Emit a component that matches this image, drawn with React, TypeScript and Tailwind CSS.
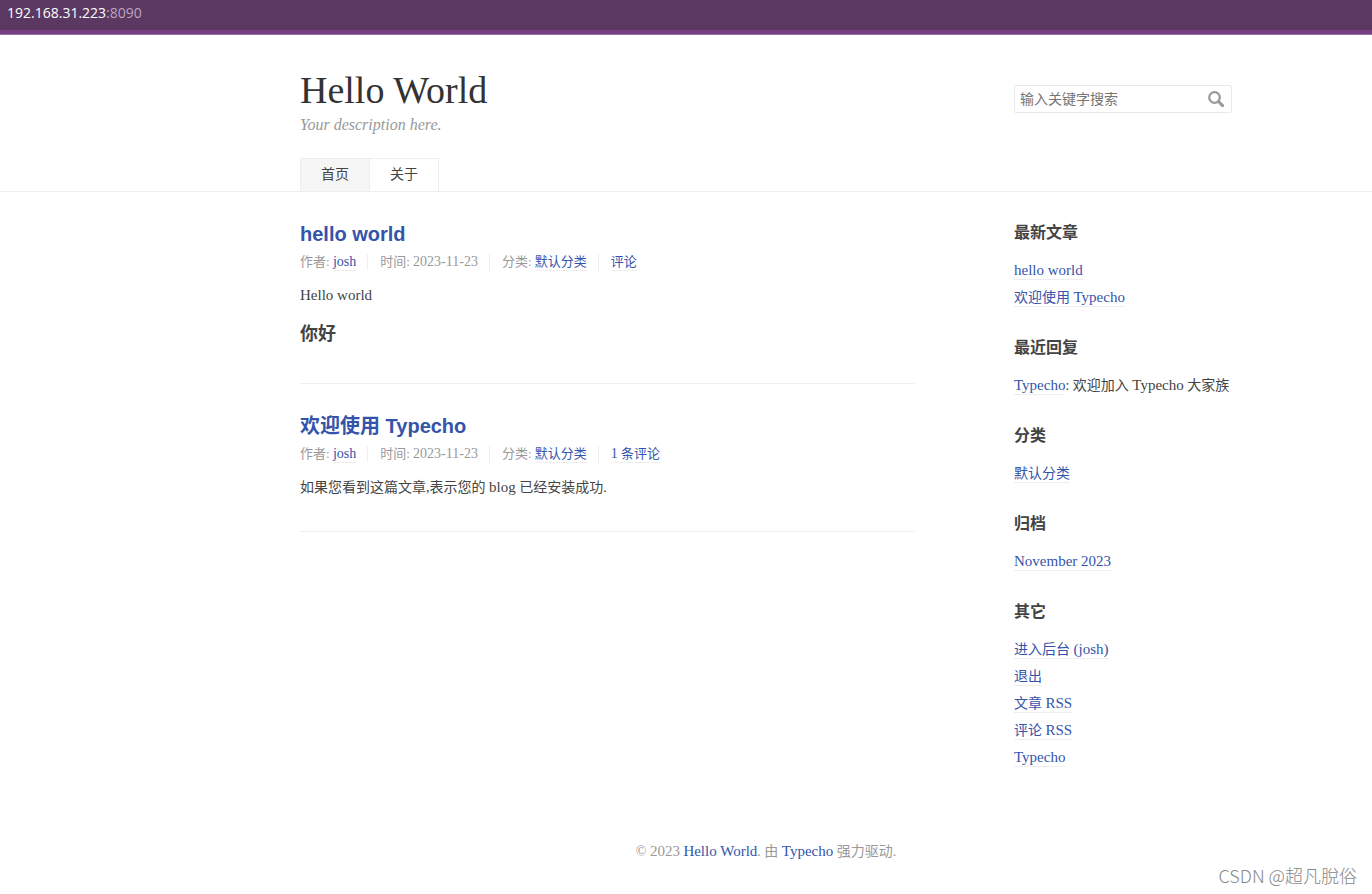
import type { ReactNode } from 'react';

interface Post {
  title: string;
  author: string;
  date: string;
  category: string;
  comments: ReactNode;
  body: ReactNode;
}

// Latin glyphs run small next to the Chinese ones, so they are set one step up
function Latin({ children }: { children: ReactNode }) {
  return <span className="text-[15px]">{children}</span>;
}

function LatinSmall({ children }: { children: ReactNode }) {
  return <span className="text-[14px]">{children}</span>;
}

function TextLink({ children }: { children: ReactNode }) {
  return (
    <a href="#" className="inline-block border-b border-[#eee] leading-4 text-[#3354aa]">
      {children}
    </a>
  );
}

const posts: Post[] = [
  {
    title: 'hello world',
    author: 'josh',
    date: '2023-11-23',
    category: '默认分类',
    comments: '评论',
    body: (
      <>
        <p><Latin>Hello world</Latin></p>
        <h3 className="mt-3 mb-[6px] text-lg leading-[26px] font-bold">你好</h3>
      </>
    ),
  },
  {
    title: '欢迎使用 Typecho',
    author: 'josh',
    date: '2023-11-23',
    category: '默认分类',
    comments: <><LatinSmall>1</LatinSmall> 条评论</>,
    body: <p>如果您看到这篇文章,表示您的 <Latin>blog</Latin> 已经安装成功.</p>,
  },
];

const widgets: { title: string; items: ReactNode[] }[] = [
  {
    title: '最新文章',
    items: [
      <TextLink><Latin>hello world</Latin></TextLink>,
      <TextLink>欢迎使用 <Latin>Typecho</Latin></TextLink>,
    ],
  },
  {
    title: '最近回复',
    items: [
      <>
        <TextLink><Latin>Typecho</Latin></TextLink>: 欢迎加入 <Latin>Typecho</Latin> 大家族
      </>,
    ],
  },
  { title: '分类', items: [<TextLink>默认分类</TextLink>] },
  { title: '归档', items: [<TextLink><Latin>November 2023</Latin></TextLink>] },
  {
    title: '其它',
    items: [
      <TextLink>进入后台 <Latin>(josh)</Latin></TextLink>,
      <TextLink>退出</TextLink>,
      <TextLink>文章 <Latin>RSS</Latin></TextLink>,
      <TextLink>评论 <Latin>RSS</Latin></TextLink>,
      <TextLink><Latin>Typecho</Latin></TextLink>,
    ],
  },
];

function AddressBar() {
  return (
    <div className="h-[35px] border-b border-[#9a6fa3] bg-[#5b3861]">
      <div className="h-[34px] border-b-4 border-[#753f82] px-[7px] font-['Open_Sans',sans-serif] text-[14px] leading-[26px] text-white">
        192.168.31.223<span className="text-[#bba5c0]">:8090</span>
      </div>
    </div>
  );
}

function SearchForm() {
  return (
    <form
      role="search"
      onSubmit={(e) => e.preventDefault()}
      className="mt-[50px] flex h-7 w-[218px] items-center rounded-xs border border-[#e9e9e9]"
    >
      <input
        type="text"
        aria-label="搜索关键字"
        placeholder="输入关键字搜索"
        className="min-w-0 flex-1 pl-[5px] text-[14px] outline-none placeholder:text-[#757575]"
      />
      <button type="submit" aria-label="搜索" className="px-[7px]">
        <svg width="16" height="16" viewBox="0 0 16 16" fill="none" stroke="#999">
          <circle cx="6.5" cy="6.5" r="5.3" strokeWidth="2.2" />
          <path d="M10.5 10.5 L14.6 14.6" strokeWidth="3" strokeLinecap="round" />
        </svg>
      </button>
    </form>
  );
}

function Header() {
  return (
    <header className="border-b border-[#eee] pr-[140px] pl-[300px]">
      <div className="flex items-start justify-between">
        <div className="pt-[34px]">
          <a href="#" className="block text-[38px] leading-[42px] text-[#333]">Hello World</a>
          <p className="mt-[2px] text-[16px] leading-6 text-[#999] italic">Your description here.</p>
        </div>
        <SearchForm />
      </div>
      <nav className="mt-[21px] flex text-[14px] leading-8">
        <a href="#" className="border border-b-0 border-[#eee] bg-[#f6f6f6] px-5">首页</a>
        <a href="#" className="border border-b-0 border-l-0 border-[#eee] px-5">关于</a>
      </nav>
    </header>
  );
}

function PostItem({ post }: { post: Post }) {
  return (
    <article className="border-b border-[#eee] pt-7 pb-[30px]">
      <h2 className="font-['Liberation_Sans','Noto_Sans_CJK_SC',sans-serif] text-xl leading-7 font-bold">
        <a href="#" className="text-[#3354aa]">{post.title}</a>
      </h2>
      <ul className="mt-[2px] flex h-6 items-center text-[13px] leading-4 text-[#999] [&>li+li]:ml-[11px] [&>li+li]:border-l [&>li+li]:border-[#eee] [&>li+li]:pl-3">
        <li>作者: <TextLink><LatinSmall>{post.author}</LatinSmall></TextLink></li>
        <li>时间: <time dateTime={post.date}><LatinSmall>{post.date}</LatinSmall></time></li>
        <li>分类: <TextLink>{post.category}</TextLink></li>
        <li><TextLink>{post.comments}</TextLink></li>
      </ul>
      <div className="mt-2 text-[14px] leading-[26px]">{post.body}</div>
    </article>
  );
}

function Sidebar() {
  return (
    <aside className="flex w-[218px] shrink-0 flex-col gap-[23px] pt-[27px]">
      {widgets.map((widget) => (
        <section key={widget.title}>
          <h3 className="text-base leading-7 font-bold">{widget.title}</h3>
          <ul className="mt-[10px] text-[14px]">
            {widget.items.map((item, i) => (
              <li key={i} className="h-[27px] leading-[27px] whitespace-nowrap">{item}</li>
            ))}
          </ul>
        </section>
      ))}
    </aside>
  );
}

export default function App() {
  return (
    <div className="relative min-h-screen bg-white font-['Liberation_Serif','Noto_Sans_CJK_SC',serif] text-[#444]">
      <AddressBar />
      <Header />

      <div className="flex justify-between gap-[99px] pr-[140px] pl-[300px]">
        <main className="min-w-0 flex-1">
          {posts.map((post) => (
            <PostItem key={post.title} post={post} />
          ))}
        </main>
        <Sidebar />
      </div>

      <footer className="mt-[67px] pr-[140px] pb-7 pl-[300px] text-center text-[14px] leading-[26px] text-[#999]">
        © <Latin>2023</Latin> <a href="#" className="text-[15px] text-[#3354aa]">Hello World</a>. 由{' '}
        <a href="#" className="text-[15px] text-[#3354aa]">Typecho</a> 强力驱动.
      </footer>

      {/* Watermark */}
      <div className="absolute right-[15px] bottom-[6px] font-['Noto_Sans_CJK_SC',sans-serif] text-lg leading-[26px] font-light text-[#888]">
        CSDN @超凡脫俗
      </div>
    </div>
  );
}
